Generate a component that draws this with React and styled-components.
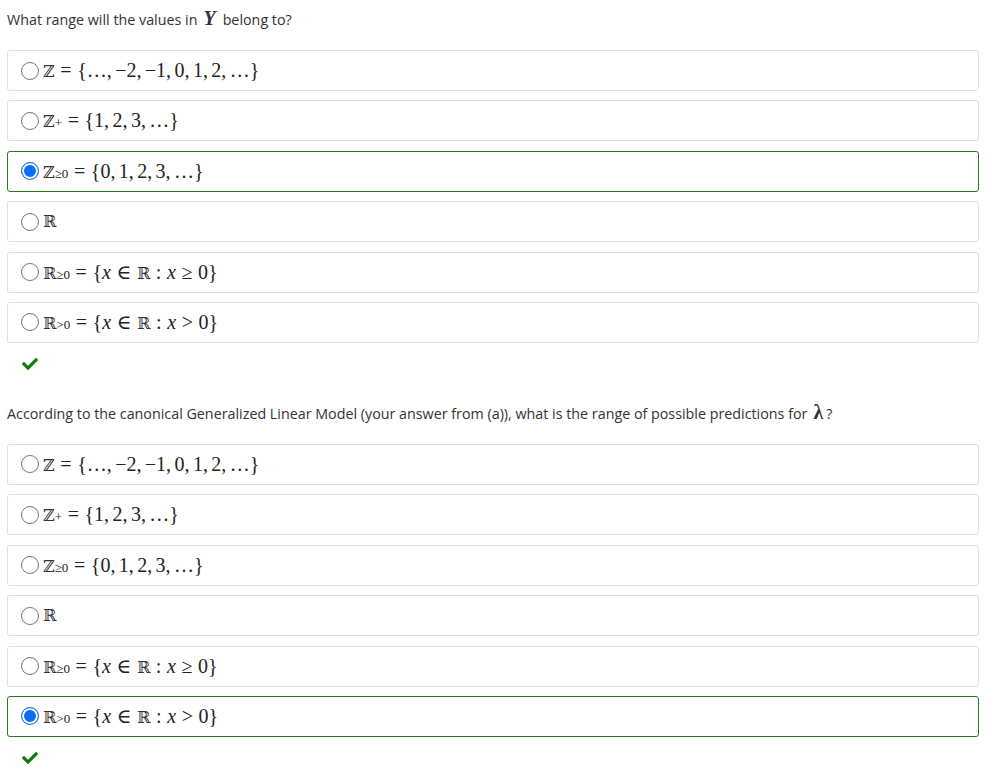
import React from "react"
import styled, { createGlobalStyle } from "styled-components";
import { FaCheck } from "react-icons/fa";

const GlobalStyle = createGlobalStyle`
    html, body {
        margin:0;
        padding:0;
        background:#fff;
    }
`

const Page = styled.div`
    display:flex;
    flex-direction:column;
    padding: 8px 13px 0 7px;
    font-family: "Open Sans", "Liberation Sans", sans-serif;
    font-size:14.3px;
    color:#333;
`

const Question = styled.div`
    ${props => `
        display:flex;
        flex-direction:column;
        margin-bottom:${props.last ? 0 : 31}px;
    `}
`

const Prompt = styled.div`
    line-height:20px;
    margin-bottom:20px;
    white-space:nowrap;
`

const PromptMath = styled.span`
    ${props => `
        font-family: "Liberation Serif", "DejaVu Serif", serif;
        font-size:20px;
        font-weight:bold;
        font-style:${props.italic ? "italic" : "normal"};
        margin:0 ${props.italic ? 7 : 3}px 0 6px;
    `}
`

const Options = styled.div`
    display:flex;
    flex-direction:column;
    gap:9.4px;
`

const Option = styled.label`
    ${props => `
        display:flex;
        align-items:center;
        height:41px;
        box-sizing:border-box;
        padding-left:13px;
        border:1px solid ${props.selected ? "#1b7f16" : "#e0e0e0"};
        border-radius:3px;
        background:#fff;
    `}
`

const Radio = styled.span`
    ${props => `
        width:18px;
        height:18px;
        box-sizing:border-box;
        border-radius:50%;
        flex-shrink:0;
        margin-right:4px;
        ${props.checked
            ? "border:1.5px solid #1a73e8; background:#0a6ef5; box-shadow: inset 0 0 0 2px #fff;"
            : "border:1px solid #767676; background:#fff;"}
    `}
`

const Math = styled.span`
    display:flex;
    align-items:baseline;
    font-family: "Liberation Serif", "DejaVu Serif", serif;
    font-size:20px;
    color:#222;
    white-space:nowrap;
`

const Set = styled.span`
    font-family: "DejaVu Serif", serif;
    font-size:16px;
    font-weight:300;
    color:#333;
`

const Sub = styled.sub`
    font-size:13px;
    vertical-align:-5px;
    line-height:0;
`

const Rel = styled.span`
    margin:0 0.28em;
`

const Comma = styled.span`
    margin-right:0.17em;
`

const Var = styled.i`
    font-style:italic;
`

const Check = styled.div`
    display:flex;
    margin:15px 0 0 15px;
    color:#0a7d0a;
    height:13px;
    align-items:center;
`

const list = (items) => {
    let views = ["{"];
    items.forEach((item, i) => {
        views.push(<span key={"i" + i}>{item}</span>);
        if (i < items.length - 1) views.push(<Comma key={"c" + i}>,</Comma>);
    })
    views.push("}");
    return views;
}

const sets = [
    <><Set>ℤ</Set><Rel>=</Rel>{list(["…", "−2", "−1", "0", "1", "2", "…"])}</>,
    <><Set>ℤ</Set><Sub>+</Sub><Rel>=</Rel>{list(["1", "2", "3", "…"])}</>,
    <><Set>ℤ</Set><Sub>≥0</Sub><Rel>=</Rel>{list(["0", "1", "2", "3", "…"])}</>,
    <><Set>ℝ</Set></>,
    <><Set>ℝ</Set><Sub>≥0</Sub><Rel>=</Rel>{"{"}<Var>x</Var><Rel>∈</Rel><Set>ℝ</Set><Rel>:</Rel><Var>x</Var><Rel>≥</Rel>{"0}"}</>,
    <><Set>ℝ</Set><Sub>&gt;0</Sub><Rel>=</Rel>{"{"}<Var>x</Var><Rel>∈</Rel><Set>ℝ</Set><Rel>:</Rel><Var>x</Var><Rel>&gt;</Rel>{"0}"}</>,
]

const QuestionBlock = (props) => {
    const loadOptions = () => {
        let views = [];
        sets.forEach((content, i) => {
            views.push(
                <Option key={i} selected={i === props.answer}>
                    <Radio checked={i === props.answer} />
                    <Math>{content}</Math>
                </Option>
            )
        })
        return views;
    }

    return (
        <Question last={props.last}>
            <Prompt>{props.children}</Prompt>
            <Options>{loadOptions()}</Options>
            <Check><FaCheck size={16} /></Check>
        </Question>
    );
};

const App = () => {
    return (
        <Page>
            <GlobalStyle />
            <QuestionBlock answer={2}>
                What range will the values in<PromptMath italic>Y</PromptMath>belong to?
            </QuestionBlock>
            <QuestionBlock answer={5} last>
                According to the canonical Generalized Linear Model (your answer from (a)), what is the range of possible predictions for<PromptMath>λ</PromptMath>?
            </QuestionBlock>
        </Page>
    );
};

export default App;
